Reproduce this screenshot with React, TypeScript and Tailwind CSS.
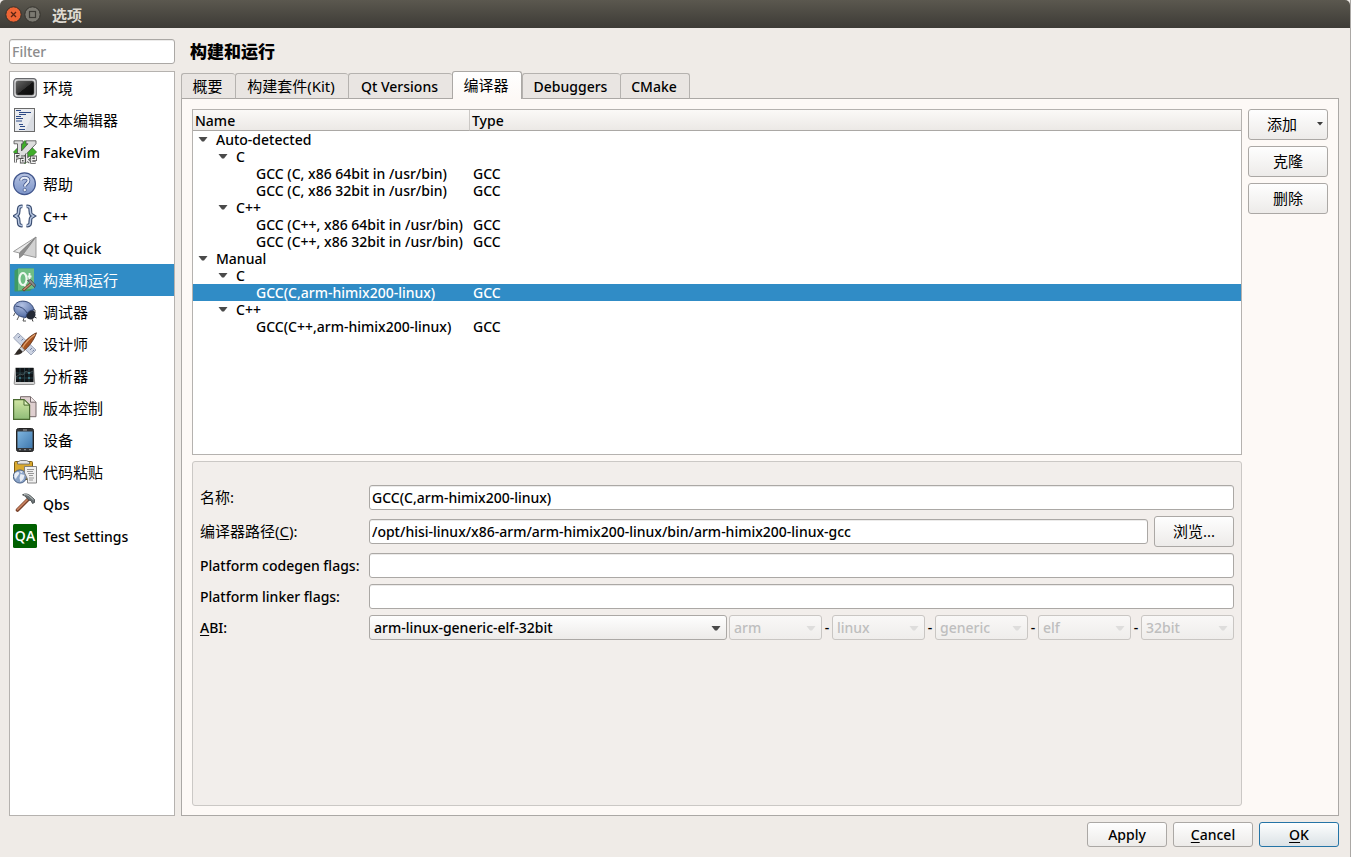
import { useState, type ReactNode } from "react";

const CJK = "text-[15px]";
const LATIN = "text-[14px] font-medium";

function sizeFor(text: string) {
  return /[\u4e00-\u9fff]/.test(text) ? CJK : LATIN;
}

function MonitorIcon() {
  return (
    <svg width="24" height="24" viewBox="0 0 24 24">
      <defs>
        <linearGradient id="mon" x1="0" y1="0" x2="1" y2="1">
          <stop offset="0" stopColor="#666" />
          <stop offset="0.5" stopColor="#333" />
          <stop offset="0.52" stopColor="#151515" />
          <stop offset="1" stopColor="#0a0a0a" />
        </linearGradient>
      </defs>
      <rect x="0.7" y="2.7" width="22.6" height="18.6" rx="3" fill="#d9d9da" stroke="#66676b" strokeWidth="1.2" />
      <rect x="3" y="5" width="18" height="14" rx="2" fill="url(#mon)" stroke="#555" strokeWidth="0.6" />
    </svg>
  );
}

function EditorIcon() {
  return (
    <svg width="24" height="24" viewBox="0 0 24 24">
      <rect x="1.500" y="0.500" width="20" height="23" fill="#e9ebef" stroke="#6a6a6a" />
      <path d="M21 4v19H12z" fill="#cfd2d8" opacity="0.6" />
      <path d="M3 2.500h5M6 4.500h12M6 6.500h7M3 8.500h5M3 10.500h7M3 13h6M6 16.500h4M7 18.500h5M6 21.500h6" stroke="#2d4a86" strokeWidth="1.200" />
    </svg>
  );
}

function VimIcon() {
  const letters =
    "M2.500 22.500v-8h4M2.500 18h3M8 17h3.200v5H8.300v-2.500h2.500M13.700 13.500v9M17 17l-3 2.500 3 3M18.500 19.700h4V17h-3.800v5.300h4";
  return (
    <svg width="24" height="24" viewBox="0 0 24 24">
      <path d="M12 0.500 23.500 12 12 23.700 0.500 12z" fill="#3fae2a" stroke="#2a7a1c" strokeWidth="0.8" />
      <path d="M1 .8h9v3H8.500V11l6.500-7.200h-2v-3h10v3L9 18.500H4.500V3.800H1z" fill="#dedede" stroke="#4b4b4b" strokeWidth="0.8" />
      <path d={letters} fill="none" stroke="#4f4f4f" strokeWidth="2.800" />
      <path d={letters} fill="none" stroke="#f4f4f4" strokeWidth="1.200" />
    </svg>
  );
}

function HelpIcon() {
  return (
    <svg width="24" height="24" viewBox="0 0 24 24">
      <defs>
        <linearGradient id="help" x1="0" y1="0" x2="0" y2="1">
          <stop offset="0" stopColor="#b7c4e2" />
          <stop offset="1" stopColor="#7b93c8" />
        </linearGradient>
      </defs>
      <circle cx="11.500" cy="11.700" r="10.900" fill="url(#help)" stroke="#41568c" strokeWidth="1.2" />
      <path d="M8 8.500C8 5 15.500 4.500 15.500 8.500c0 3-3.700 3-3.700 6" fill="none" stroke="#42568a" strokeWidth="3.600" />
      <path d="M8 8.500C8 5 15.500 4.500 15.500 8.500c0 3-3.700 3-3.700 6" fill="none" stroke="#e8edf7" strokeWidth="2" />
      <circle cx="11.800" cy="18" r="1.700" fill="#e8edf7" stroke="#42568a" strokeWidth="0.7" />
    </svg>
  );
}

function BracesIcon() {
  const d =
    "M9.500 2.500C3.500 1.500 7 8.500 4.800 10.500L2.500 12l2.300 1.500C7 15.500 3.500 22.500 9.500 21.500M13.500 2.500c6-1 2.500 6 4.700 8l2.300 1.500-2.300 1.500c-2.200 2 1.300 9-4.700 8";
  return (
    <svg width="24" height="24" viewBox="0 0 24 24" fill="none">
      <path d={d} stroke="#3c4f73" strokeWidth="3.800" />
      <path d={d} stroke="#b9c8e2" strokeWidth="1.500" />
    </svg>
  );
}

function PlaneIcon() {
  return (
    <svg width="24" height="24" viewBox="0 0 24 24" strokeLinejoin="round">
      <path d="M23 1 0.500 15.500l6 1.500z" fill="#e9e9e9" stroke="#858585" strokeWidth="0.8" />
      <path d="M23 1 6.500 17v5l4-3.500z" fill="#8e8e8e" stroke="#777" strokeWidth="0.700" />
      <path d="M23 1 10 18.500 23 21.500z" fill="#d2d2d2" stroke="#858585" strokeWidth="0.8" />
    </svg>
  );
}

function BuildIcon() {
  return (
    <svg width="24" height="24" viewBox="0 0 24 24">
      <path d="M1.500 2.500 5 .5h16v18L17 23 1.500 23.500z" fill="#3f9a63" />
      <path d="M5 .5h16v20L5 22.500z" fill="#6fbd83" />
      <ellipse cx="10" cy="11" rx="3.600" ry="6" fill="none" stroke="#eef8f0" strokeWidth="2.200" />
      <path d="m10.500 16 3 3.500M16.500 5v8.500c0 1 .5 1.500 1.500 1.500M14.500 8.500h4" fill="none" stroke="#eef8f0" strokeWidth="1.800" />
      <path d="m10 22.500 9-8" stroke="#683c2b" strokeWidth="3" />
      <path d="m10.500 22 8.500-7.500" stroke="#c08e74" strokeWidth="1.500" />
      <path d="m14.500 12.500 3-1 5 5.500-1 2.500-2.500-3z" fill="#8d8d8d" stroke="#444" strokeWidth="0.8" />
    </svg>
  );
}

function BugIcon() {
  return (
    <svg width="24" height="24" viewBox="0 0 24 24">
      <defs>
        <radialGradient id="bug" cx="0.4" cy="0.250" r="0.8">
          <stop offset="0" stopColor="#b3c2e4" />
          <stop offset="1" stopColor="#4b669f" />
        </radialGradient>
      </defs>
      <path d="M2 13 .5 16M6 16l-2 4M11 18l-1 3h3M20 9l2 1v3" fill="none" stroke="#555" strokeWidth="1" />
      <circle cx="17.500" cy="14.500" r="5" fill="#252b36" />
      <path d="M1 9.500C0 3.500 6 .3 12 1.300c5.500 1 8.500 5 9 8.700-5 0-7.500 3-8 7.500C8.500 17.500 2 15 1 9.500z" fill="url(#bug)" stroke="#2d3f6c" strokeWidth="0.900" />
      <path d="M2.500 6C8 6.500 12 9 14 13" fill="none" stroke="#2f426f" strokeWidth="0.900" />
      <path d="m21.500 17 2 1M19 19l1 2.500" stroke="#333" />
    </svg>
  );
}

function DesignIcon() {
  return (
    <svg width="24" height="24" viewBox="0 0 24 24">
      <path d="M5 1 23 18l-5 5L.5 6z" fill="#ccd3e2" stroke="#8c96ac" strokeWidth="0.800" />
      <path d="m7 4-2 2M10 7 8.500 8.500M19 16l-2 2M16 13l-1 1M21 18l-1.500 1.500" stroke="#7583a3" strokeWidth="1" />
      <path d="M23.500.8C18 3 10 10 7.500 16l3 3C16 15 21.500 7 23.500.8z" fill="#a5521f" stroke="#572a12" strokeWidth="0.800" />
      <path d="M22 2.500C17 6 12 11 9 16.500" fill="none" stroke="#dfa06e" strokeWidth="1.300" />
      <path d="m8.500 14.800 3.200 3.200-2 2-3.500-3.500z" fill="#d2d4d8" stroke="#666" strokeWidth="0.600" />
      <path d="M6.500 16.500 9.700 20C8 22.500 4 23.200 1 22.700c2-1 2.800-4.500 5.500-6.200z" fill="#302a26" />
    </svg>
  );
}

function AnalyzerIcon() {
  return (
    <svg width="24" height="24" viewBox="0 0 24 24">
      <path d="M2.500 4h18l1.200 15.500q-.2 1-1 1H2.200q-1 0-1-1z" fill="#d4d4d4" stroke="#777" strokeWidth="0.800" />
      <rect x="3" y="4" width="17.500" height="14" fill="#101417" />
      <path d="M7 4v14M11.500 4v14M16 4v14M3 9h17M3 14h17" stroke="#2c4b53" strokeWidth="0.700" />
      <path d="m3 13 4-3 3 1 3-4 3 2 4-2" fill="none" stroke="#59696c" strokeWidth="0.700" />
      <path d="M15.200 9h1.600M15.200 14h1.600M6.200 14h1.600" stroke="#5cc3d4" strokeWidth="1" />
    </svg>
  );
}

function VersionIcon() {
  return (
    <svg width="24" height="24" viewBox="0 0 24 24">
      <defs>
        <linearGradient id="ver" x1="0" y1="0" x2="0" y2="1">
          <stop offset="0" stopColor="#d2e6a4" />
          <stop offset="1" stopColor="#8fbc78" />
        </linearGradient>
      </defs>
      <path d="M7.500.7h10l5.500 5.500v14.500H7.500z" fill="#dfcfd0" stroke="#75696b" />
      <path d="M17.500.7v5.500H23" fill="#f2e8e9" stroke="#75696b" />
      <path d="M.6 3.600h10.500l5.500 5.500v14.300H.6z" fill="url(#ver)" stroke="#4a6a31" strokeWidth="1.200" />
      <path d="M11 3.600v5.500h5.500z" fill="#e2f2c3" stroke="#4a6a31" />
    </svg>
  );
}

function DeviceIcon() {
  return (
    <svg width="24" height="24" viewBox="0 0 24 24">
      <defs>
        <linearGradient id="dev" x1="0" y1="0" x2="1" y2="1">
          <stop offset="0" stopColor="#7fb5df" />
          <stop offset="1" stopColor="#3f78ad" />
        </linearGradient>
      </defs>
      <rect x="3.500" y="0.500" width="17" height="23" rx="2" fill="#34373b" stroke="#222" />
      <rect x="4.500" y="3.500" width="15" height="16.500" fill="url(#dev)" />
      <path d="M10 2h4" stroke="#aaa" />
      <path d="M6 21.700h2M11 21.700h2M16 21.700h2" stroke="#999" />
    </svg>
  );
}

function PasteIcon() {
  return (
    <svg width="24" height="24" viewBox="0 0 24 24">
      <rect x="1.500" y="1.500" width="18" height="18" rx="1" fill="#d9a930" stroke="#7f5e12" />
      <path d="M4.500 4V2l3-1.500h6L16.500 2v2z" fill="#e4e4e4" stroke="#666" strokeWidth="0.800" />
      <circle cx="6.900" cy="16.500" r="6.600" fill="#8ba4c8" stroke="#42587d" strokeWidth="0.900" />
      <path d="M2 13c3-2 5-1 4 1s-2 2-3 5c-2-1-2.500-4-1-6zM7.500 14l4 1-1 4-3 3-1-4zM7 10.800l3 1-2 1.500z" fill="#e9eef5" />
      <path d="M11.500 6.500h12v16.500h-9V19l-3-6z" fill="#f0f0f0" stroke="#777" strokeWidth="0.900" />
      <path d="M14 9.500h7M14 11.500h6M15 13.500h6M16 15.500h4M16 18h5M16 20h4" stroke="#8d8d8d" strokeWidth="0.900" />
    </svg>
  );
}

function HammerIcon() {
  return (
    <svg width="24" height="24" viewBox="0 0 24 24">
      <path d="M4.500 18 15 7.500" stroke="#77402a" strokeWidth="3.600" strokeLinecap="round" />
      <path d="M4.500 17.500 15 7" stroke="#cc8563" strokeWidth="1.700" strokeLinecap="round" />
      <path d="M9.500 2.800C12 1.300 15 1.800 17 3.500l4.500 4v3l-2 1-1.500-3-2.500-.5-2.500-3C12 4 11 3.500 9.500 2.800z" fill="#697073" stroke="#3b4143" strokeWidth="0.800" />
      <path d="M11 2.800c2-.5 4 0 5.500 1.500l4 3.500" fill="none" stroke="#c4cccc" strokeWidth="1" />
    </svg>
  );
}

function QaIcon() {
  return (
    <svg width="24" height="24" viewBox="0 0 24 24">
      <rect width="24" height="24" rx="1.500" fill="#006000" />
      <text x="12" y="17" textAnchor="middle" fill="#fff" fontFamily="Open Sans, sans-serif" fontWeight="600" fontSize="14">
        QA
      </text>
    </svg>
  );
}

const categories: { label: string; icon: ReactNode }[] = [
  { label: "环境", icon: <MonitorIcon /> },
  { label: "文本编辑器", icon: <EditorIcon /> },
  { label: "FakeVim", icon: <VimIcon /> },
  { label: "帮助", icon: <HelpIcon /> },
  { label: "C++", icon: <BracesIcon /> },
  { label: "Qt Quick", icon: <PlaneIcon /> },
  { label: "构建和运行", icon: <BuildIcon /> },
  { label: "调试器", icon: <BugIcon /> },
  { label: "设计师", icon: <DesignIcon /> },
  { label: "分析器", icon: <AnalyzerIcon /> },
  { label: "版本控制", icon: <VersionIcon /> },
  { label: "设备", icon: <DeviceIcon /> },
  { label: "代码粘贴", icon: <PasteIcon /> },
  { label: "Qbs", icon: <HammerIcon /> },
  { label: "Test Settings", icon: <QaIcon /> },
];

const tabs = [
  { label: "概要", width: "w-[54px]" },
  { label: "构建套件(Kit)", width: "w-[113px]" },
  { label: "Qt Versions", width: "w-[104px]" },
  { label: "编译器", width: "w-[70px]" },
  { label: "Debuggers", width: "w-[98px]" },
  { label: "CMake", width: "w-[70px]" },
];

type Row = { name: string; level: 0 | 1 | 2; type?: string };

const rows: Row[] = [
  { name: "Auto-detected", level: 0 },
  { name: "C", level: 1 },
  { name: "GCC (C, x86 64bit in /usr/bin)", level: 2, type: "GCC" },
  { name: "GCC (C, x86 32bit in /usr/bin)", level: 2, type: "GCC" },
  { name: "C++", level: 1 },
  { name: "GCC (C++, x86 64bit in /usr/bin)", level: 2, type: "GCC" },
  { name: "GCC (C++, x86 32bit in /usr/bin)", level: 2, type: "GCC" },
  { name: "Manual", level: 0 },
  { name: "C", level: 1 },
  { name: "GCC(C,arm-himix200-linux)", level: 2, type: "GCC" },
  { name: "C++", level: 1 },
  { name: "GCC(C++,arm-himix200-linux)", level: 2, type: "GCC" },
];

const indent = ["pl-0", "pl-[20px]", "pl-[60px]"];

function Arrow({ className = "" }: { className?: string }) {
  return (
    <svg className={className} width="10" height="5" viewBox="0 0 10 5">
      <path d="M0.500 0h9L6 4.500H4z" fill="currentColor" />
    </svg>
  );
}

const buttonLook =
  "flex w-20 items-center justify-center rounded-[3px] border border-[#aba8a5] bg-linear-to-b from-[#fefefe] to-[#edebe9] text-black";

const inputLook =
  "h-[25px] w-full min-w-0 rounded-[3px] border border-[#aba8a5] bg-white px-[2px] text-[14px] font-medium shadow-[inset_0_1px_0_#ecebea] outline-none";

function Dropdown({ id, label, value, disabled }: { id: string; label?: string; value: string; disabled?: boolean }) {
  return (
    <div className={`relative ${disabled ? "w-[93px] shrink-0" : "mr-[2px] min-w-0 flex-1"}`}>
      <select
        id={id}
        aria-label={label}
        disabled={disabled}
        className={`h-[25px] w-full appearance-none rounded-[3px] border bg-linear-to-b px-1 text-[14px] font-medium opacity-100 ${
          disabled
            ? "border-[#c9c6c3] from-[#f9f8f7] to-[#efedeb] text-[#bebebe]"
            : "border-[#aba8a5] from-[#fefefe] to-[#edebe9] text-black"
        }`}
      >
        <option>{value}</option>
      </select>
      <Arrow className={`pointer-events-none absolute top-[11px] right-[6px] ${disabled ? "text-[#dedddc]" : "text-[#4a4a4a]"}`} />
    </div>
  );
}

export default function App() {
  const [category, setCategory] = useState(6);
  const [tab, setTab] = useState(3);
  const [selected, setSelected] = useState(9);

  return (
    <div className="flex h-screen min-h-[700px] flex-col border-r border-[#aba8a5] bg-[#efebe7] font-['Noto_Sans','Noto_Sans_CJK_SC',sans-serif] text-[14px] text-black">
      <header className="flex h-7 shrink-0 items-center gap-[2px] rounded-t-[5px] bg-linear-to-b from-[#5b584f] to-[#3d3b36] pl-[5px]">
        <button aria-label="Close" className="size-[17px]">
          <svg width="17" height="17" viewBox="0 0 17 17">
            <circle cx="8.500" cy="8.500" r="7.700" fill="#ee6535" stroke="#34302a" />
            <path d="m6 6 5 5M11 6l-5 5" stroke="#5a2412" strokeWidth="1.300" />
          </svg>
        </button>
        <button aria-label="Maximize" className="size-[17px]">
          <svg width="17" height="17" viewBox="0 0 17 17">
            <circle cx="8.500" cy="8.500" r="7.700" fill="#7c7a72" stroke="#34322d" />
            <rect x="5.500" y="5.500" width="6" height="6" fill="none" stroke="#3c3a35" strokeWidth="1.200" />
          </svg>
        </button>
        <h1 className="pt-[2px] pl-[9px] text-[15px] font-bold text-[#dfdbd2]">选项</h1>
      </header>

      <div className="flex min-h-0 flex-1 gap-[6px] pt-[11px] pr-[11px] pl-[9px]">
        <aside className="flex w-[166px] shrink-0 flex-col gap-[7px]">
          <input
            type="text"
            aria-label="Filter"
            placeholder="Filter"
            className={`${inputLook} shrink-0 placeholder:text-[#8c8c8c]`}
          />
          <ul className="flex-1 border border-[#b5b2af] bg-white">
            {categories.map((item, i) => (
              <li key={item.label}>
                <button
                  onClick={() => setCategory(i)}
                  className={`flex h-8 w-full items-center gap-[6px] pl-[3px] text-left ${sizeFor(item.label)} ${
                    i === category ? "bg-[#308cc6] text-white" : ""
                  }`}
                >
                  {item.icon}
                  <span>{item.label}</span>
                </button>
              </li>
            ))}
          </ul>
        </aside>

        <main className="flex min-w-0 flex-1 flex-col">
          <h2 className="h-8 shrink-0 pl-[9px] text-[17px] leading-[26px] font-black">构建和运行</h2>

          <div role="tablist" className="relative z-10 -mb-px flex h-7 shrink-0 items-end">
            {tabs.map((t, i) => (
              <button
                key={t.label}
                role="tab"
                aria-selected={i === tab}
                onClick={() => setTab(i)}
                className={`${t.width} ${sizeFor(t.label)} rounded-t-[3px] border-t border-l pr-[2px] whitespace-nowrap ${
                  i === tab
                    ? "h-7 border-r border-[#aba8a5] bg-linear-to-b from-white to-[#fdf9f6]"
                    : "h-[26px] border-b border-[#b5b2af] border-b-[#aba8a5] bg-[#e9e5e2] last:border-r"
                }`}
              >
                {t.label}
              </button>
            ))}
          </div>

          <div className="flex min-h-0 flex-1 gap-[6px] border border-[#aba8a5] bg-[#fdf9f6] p-[10px] pb-[9px]">
            <div className="grid min-w-0 flex-1 grid-rows-[minmax(0,1fr)_minmax(0,1fr)] gap-[6px]">
              <div className="overflow-hidden border border-[#b5b2af] bg-white">
                <table className="w-full table-fixed border-separate border-spacing-0 leading-[17px] font-medium">
                  <thead>
                    <tr className="h-[21px] bg-linear-to-b from-[#fbf9f7] to-[#ebe8e5]">
                      <th className="w-[277px] border-r border-b border-r-[#cbc8c5] border-b-[#aba8a5] p-0 pl-[2px] text-left font-medium">Name</th>
                      <th className="border-b border-[#aba8a5] p-0 pl-[2px] text-left font-medium">Type</th>
                    </tr>
                  </thead>
                  <tbody>
                    {rows.map((row, i) => (
                      <tr
                        key={i}
                        onClick={() => setSelected(i)}
                        className={`h-[17px] ${i === selected ? "bg-[#308cc6] text-white" : ""}`}
                      >
                        <td className="p-0 whitespace-nowrap">
                          <div className={`flex h-[17px] items-center ${indent[row.level]}`}>
                            {row.level < 2 && <Arrow className="mx-[5px] text-[#4a4a4a]" />}
                            <span className="pl-[3px]">{row.name}</span>
                          </div>
                        </td>
                        <td className="p-0 pl-[3px]">{row.type}</td>
                      </tr>
                    ))}
                  </tbody>
                </table>
              </div>

              <form
                onSubmit={(e) => e.preventDefault()}
                className="grid grid-cols-[163px_minmax(0,1fr)] content-start items-center gap-[6px] rounded-[3px] border border-[#cbc8c5] bg-[#f2eeeb] px-[7px] pt-[23px]"
              >
                <label htmlFor="name" className="text-[15px] leading-[25px]">名称:</label>
                <input id="name" type="text" defaultValue="GCC(C,arm-himix200-linux)" className={inputLook} />

                <label htmlFor="path" className="text-[15px] leading-[25px]">
                  编译器路径(<u className="underline-offset-2">C</u>):
                </label>
                <div className="flex items-center gap-[6px]">
                  <input
                    id="path"
                    type="text"
                    defaultValue="/opt/hisi-linux/x86-arm/arm-himix200-linux/bin/arm-himix200-linux-gcc"
                    className={inputLook}
                  />
                  <button className={`${buttonLook} h-[31px] shrink-0 text-[15px]`}>浏览...</button>
                </div>

                <label htmlFor="codegen" className="leading-[25px] font-medium whitespace-nowrap">Platform codegen flags:</label>
                <input id="codegen" type="text" className={inputLook} />

                <label htmlFor="linker" className="leading-[25px] font-medium whitespace-nowrap">Platform linker flags:</label>
                <input id="linker" type="text" className={inputLook} />

                <label htmlFor="abi" className="leading-[25px] font-medium">
                  <u className="underline-offset-2">A</u>BI:
                </label>
                <div className="flex items-center font-medium">
                  <Dropdown id="abi" value="arm-linux-generic-elf-32bit" />
                  <Dropdown id="arch" label="Architecture" value="arm" disabled />
                  <span className="w-[10px] text-center">-</span>
                  <Dropdown id="os" label="OS" value="linux" disabled />
                  <span className="w-[10px] text-center">-</span>
                  <Dropdown id="flavor" label="OS flavor" value="generic" disabled />
                  <span className="w-[10px] text-center">-</span>
                  <Dropdown id="format" label="Binary format" value="elf" disabled />
                  <span className="w-[10px] text-center">-</span>
                  <Dropdown id="width" label="Word width" value="32bit" disabled />
                </div>
              </form>
            </div>

            <div className="flex flex-col gap-[6px] text-[15px]">
              <button className={`${buttonLook} relative h-[31px] pr-3`}>
                添加
                <svg className="absolute top-3 right-1" width="6" height="4" viewBox="0 0 6 4">
                  <path d="M0 0h6L3 3.500z" fill="#3c3c3c" />
                </svg>
              </button>
              <button className={`${buttonLook} h-[31px]`}>克隆</button>
              <button className={`${buttonLook} h-[31px]`}>删除</button>
            </div>
          </div>
        </main>
      </div>

      <footer className="flex shrink-0 justify-end gap-[6px] pt-[6px] pr-[11px] pb-[10px] font-medium">
        <button className={`${buttonLook} h-[25px]`}>Apply</button>
        <button className={`${buttonLook} h-[25px]`}>
          <u className="underline-offset-2">C</u>ancel
        </button>
        <button className="flex h-[25px] w-20 items-center justify-center rounded-[3px] border border-[#2474a6] bg-linear-to-b from-[#fdfefe] to-[#dbe2e6]">
          <u className="underline-offset-2">O</u>K
        </button>
      </footer>
    </div>
  );
}
